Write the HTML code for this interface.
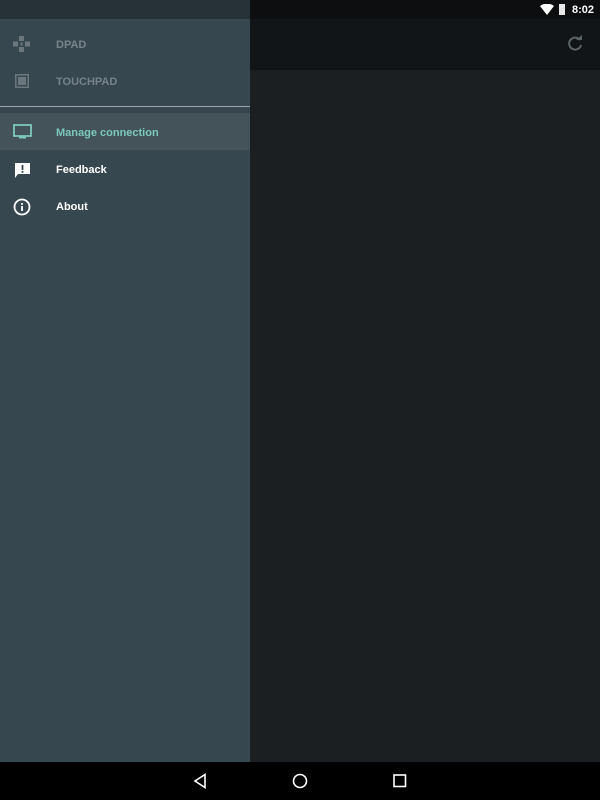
<!DOCTYPE html>
<html><head><style>
body{margin:0;width:600px;height:800px;position:relative;overflow:hidden;background:#1b1f22;font-family:"Liberation Sans",sans-serif}
div{position:absolute}
.t{font-size:11px;left:56px;font-weight:bold}
</style></head><body>
<div style="left:0;top:0;width:600px;height:19px;background:#0c0e0f"></div>
<div style="left:250px;top:19px;width:350px;height:51px;background:#121517"></div>
<div style="left:0;top:0;width:250px;height:19px;background:#263238"></div>
<div style="left:0;top:19px;width:250px;height:743px;background:#37474f"></div>
<div style="left:0;top:106px;width:250px;height:1px;background:#9ea5a8"></div>
<div style="left:0;top:113px;width:250px;height:37px;background:#435359"></div>
<svg style="position:absolute;left:13px;top:36px" width="18" height="16" viewBox="0 0 18 16"><g fill="#6b777d"><rect x="6" y="0" width="5" height="5"/><rect x="6" y="11" width="5" height="5"/><rect x="0" y="5.5" width="5" height="5"/><rect x="12" y="5.5" width="5" height="5"/><rect x="7.5" y="6.5" width="2" height="3"/></g></svg>
<div class="t" style="top:39px;color:#76838a">DPAD</div>
<svg style="position:absolute;left:15px;top:74px" width="14" height="14"><rect x="0.75" y="0.75" width="12.5" height="12.5" fill="none" stroke="#6b777d" stroke-width="1.5"/><rect x="3" y="3" width="8" height="8" fill="#6b777d"/></svg>
<div class="t" style="top:76px;color:#76838a">TOUCHPAD</div>
<svg style="position:absolute;left:13px;top:124px" width="19" height="15"><rect x="1" y="1" width="17" height="11" fill="none" stroke="#7cc8bd" stroke-width="1.8"/><rect x="6" y="12.5" width="7" height="2" fill="#7cc8bd"/></svg>
<div class="t" style="top:127px;color:#7cc8bd">Manage connection</div>
<svg style="position:absolute;left:14px;top:162px" width="17" height="17"><path d="M1 1h15v11H4l-3 4z" fill="#fff"/><rect x="7.6" y="3" width="1.8" height="5" fill="#37474f"/><rect x="7.6" y="9" width="1.8" height="1.8" fill="#37474f"/></svg>
<div class="t" style="top:164px;color:#fff">Feedback</div>
<svg style="position:absolute;left:13px;top:198px" width="18" height="18"><circle cx="9" cy="9" r="7.5" fill="none" stroke="#fff" stroke-width="1.8"/><rect x="8.1" y="8" width="1.8" height="5" fill="#fff"/><rect x="8.1" y="5" width="1.8" height="1.8" fill="#fff"/></svg>
<div class="t" style="top:201px;color:#fff">About</div>
<svg style="position:absolute;left:566px;top:35px" width="18" height="18" viewBox="0 0 18 18"><path d="M14 5A6 6 0 1 0 15 10" fill="none" stroke="#5c6366" stroke-width="2"/><path d="M10 5h6V0z" fill="#5c6366"/></svg>
<svg style="position:absolute;left:540px;top:4px" width="14" height="11"><path d="M0 2Q7-3 14 2L7 11z" fill="#fff"/></svg>
<div style="left:559px;top:4px;width:6px;height:11px;background:#fff;opacity:.9"></div>
<div style="left:572px;top:4px;font-size:11px;color:#fff;font-weight:bold">8:02</div>
<div style="left:0;top:762px;width:600px;height:38px;background:#000"></div>
<svg style="position:absolute;left:193px;top:773px" width="14" height="16"><path d="M12 1.5L2 8l10 6.5z" fill="none" stroke="#fff" stroke-width="1.6"/></svg>
<svg style="position:absolute;left:292px;top:773px" width="16" height="16"><circle cx="8" cy="8" r="6.5" fill="none" stroke="#fff" stroke-width="1.6"/></svg>
<svg style="position:absolute;left:393px;top:774px" width="14" height="14"><rect x="1" y="1" width="11.5" height="11.5" fill="none" stroke="#fff" stroke-width="1.6"/></svg>
</body></html>
